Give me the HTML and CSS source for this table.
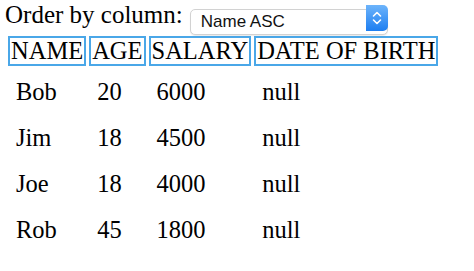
FILE: index.html
```html
<!DOCTYPE html>
<html>
<head>
<meta charset="utf-8">
<link rel="stylesheet" href="styles.css">
</head>
<body>
<div class="toolbar">
  <label class="label" for="order">Order by column:</label>
  <span class="select-wrap">
    <select id="order" class="select">
      <option>Name ASC</option>
      <option>Name DESC</option>
    </select>
    <span class="select-arrows">
      <svg width="10" height="16" viewBox="0 0 10 16"><path d="M1.5 6 L5 2.5 L8.5 6 M1.5 10 L5 13.5 L8.5 10" fill="none" stroke="#fff" stroke-width="1.6" stroke-linecap="round" stroke-linejoin="round"/></svg>
    </span>
  </span>
</div>
<table class="grid">
  <thead>
    <tr><th>NAME</th><th>AGE</th><th>SALARY</th><th>DATE OF BIRTH</th></tr>
  </thead>
  <tbody>
    <tr><td>Bob</td><td>20</td><td>6000</td><td>null</td></tr>
    <tr><td>Jim</td><td>18</td><td>4500</td><td>null</td></tr>
    <tr><td>Joe</td><td>18</td><td>4000</td><td>null</td></tr>
    <tr><td>Rob</td><td>45</td><td>1800</td><td>null</td></tr>
  </tbody>
</table>
</body>
</html>
```
FILE: styles.css
```css
html, body {
  margin: 0;
  background: #fff;
}
body {
  padding: 1px 5px 0;
  font-family: "Liberation Serif", "Times New Roman", serif;
  font-size: 24.5px;
  color: #000;
}
.toolbar {
  display: flex;
  align-items: flex-start;
  height: 32px;
}
.label {
  font-size: 25px;
  line-height: 28px;
}
.select-wrap {
  position: relative;
  margin-left: 7px;
  margin-top: 4px;
  display: inline-block;
}
.select {
  -webkit-appearance: none;
  appearance: none;
  box-sizing: border-box;
  width: 198px;
  height: 26px;
  margin: 0;
  padding: 0 24px 0 10px;
  border: 1px solid #d2d2d2;
  border-radius: 5px;
  background: #fff;
  box-shadow: 0 1px 1px rgba(0,0,0,0.08);
  font-family: "Liberation Sans", Arial, sans-serif;
  font-size: 17px;
  color: #111;
  outline: none;
}
.select-arrows {
  position: absolute;
  top: 0;
  right: 0;
  width: 22px;
  height: 26px;
  border-radius: 0 5px 5px 0;
  background: linear-gradient(#6db4fb, #1d7ef1);
  display: flex;
  align-items: center;
  justify-content: center;
}
.grid {
  border-collapse: separate;
  border-spacing: 3px;
}
.grid th {
  border: 2px solid #4aa7e8;
  padding: 0 1px;
  font-weight: normal;
  line-height: 26px;
  text-align: left;
}
.grid td {
  padding: 10px 8px 7px;
  line-height: 26px;
  text-align: left;
}
```
